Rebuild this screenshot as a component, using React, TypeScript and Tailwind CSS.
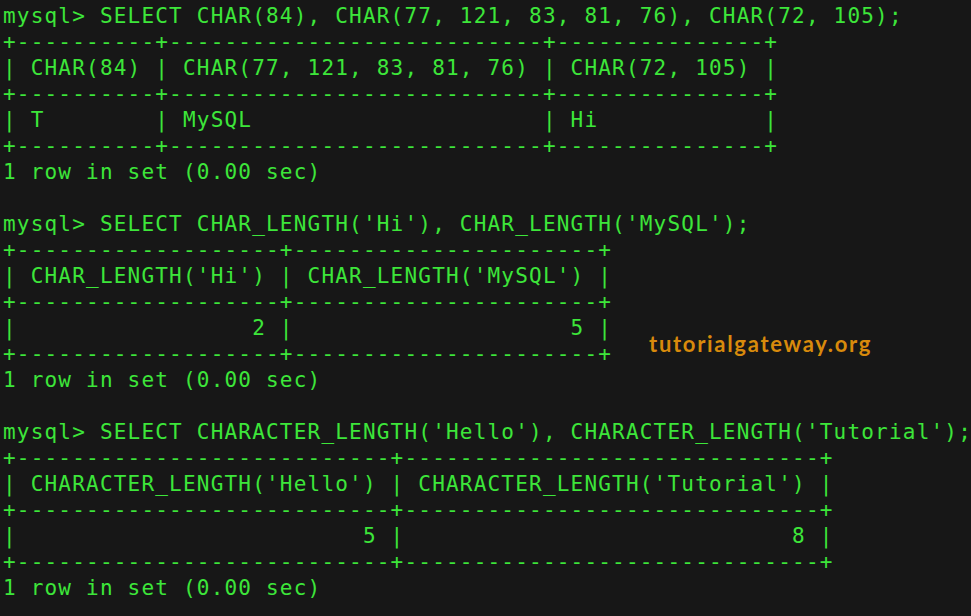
const lines = [
  "mysql> SELECT CHAR(84), CHAR(77, 121, 83, 81, 76), CHAR(72, 105);",
  "+----------+---------------------------+---------------+",
  "| CHAR(84) | CHAR(77, 121, 83, 81, 76) | CHAR(72, 105) |",
  "+----------+---------------------------+---------------+",
  "| T        | MySQL                     | Hi            |",
  "+----------+---------------------------+---------------+",
  "1 row in set (0.00 sec)",
  "",
  "mysql> SELECT CHAR_LENGTH('Hi'), CHAR_LENGTH('MySQL');",
  "+-------------------+----------------------+",
  "| CHAR_LENGTH('Hi') | CHAR_LENGTH('MySQL') |",
  "+-------------------+----------------------+",
  "|                 2 |                    5 |",
  "+-------------------+----------------------+",
  "1 row in set (0.00 sec)",
  "",
  "mysql> SELECT CHARACTER_LENGTH('Hello'), CHARACTER_LENGTH('Tutorial');",
  "+---------------------------+------------------------------+",
  "| CHARACTER_LENGTH('Hello') | CHARACTER_LENGTH('Tutorial') |",
  "+---------------------------+------------------------------+",
  "|                         5 |                            8 |",
  "+---------------------------+------------------------------+",
  "1 row in set (0.00 sec)",
];

export default function App() {
  return (
    <div className="relative w-[971px] h-[616px] overflow-hidden bg-[#171717]">
      <div className="flex flex-col pt-[3px] pl-[3px] font-['DejaVu_Sans_Mono',monospace] text-[21px] leading-[26px] tracking-[1.2px] text-[#3de63a]">
        {lines.map((l, i) => (
          <div key={i} className="h-[26px] whitespace-pre">
            {l}
          </div>
        ))}
      </div>
      {/* site watermark */}
      <div className="absolute left-[649px] top-[331px] font-['Lato',sans-serif] font-bold text-[22px] leading-[26px] tracking-[1.7px] text-[#d88a0c]">
        tutorialgateway.org
      </div>
    </div>
  );
}
